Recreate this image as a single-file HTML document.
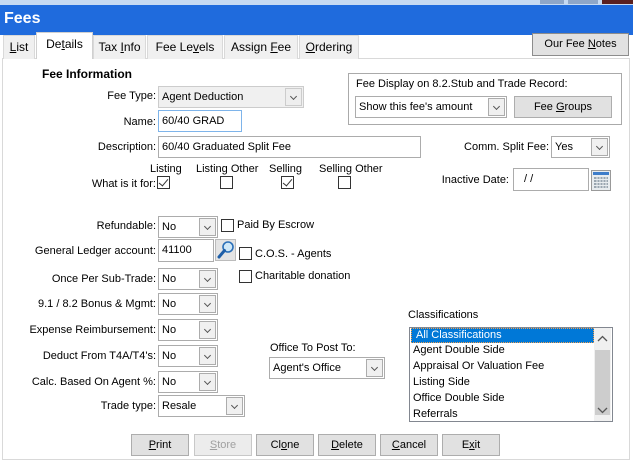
<!DOCTYPE html>
<html><head><style>
*{box-sizing:border-box;margin:0;padding:0}
body{width:633px;height:462px;position:relative;background:#fff;font-family:"Liberation Sans",sans-serif;font-size:11px;color:#000;overflow:hidden}
.a{position:absolute;white-space:nowrap}
.l{position:absolute;text-align:right;white-space:nowrap;line-height:14px}
.tab{position:absolute;top:35px;height:24px;background:#f0f0f0;border:1px solid #d9d9d9;border-bottom:none;line-height:22px;text-align:center;font-size:12px}
.sel{position:absolute;height:22px;border:1px solid #acacac;background:#fff;line-height:20px;padding-left:3px}
.sel .d{position:absolute;right:1px;top:1px;bottom:1px;width:17px;border:1px solid #acacac;background:#f0f0f0}
.sel .d:after{content:"";position:absolute;left:5px;top:5px;width:4px;height:4px;border-right:1px solid #555;border-bottom:1px solid #555;transform:rotate(45deg)}
.inp{position:absolute;height:22px;border:1px solid #acacac;background:#fff;line-height:20px;padding-left:3px}
.cb{position:absolute;width:13px;height:13px;border:1px solid #333;background:#fff}
.ck:after{content:"";position:absolute;left:3px;top:0px;width:4px;height:8px;border-right:1.3px solid #333;border-bottom:1.3px solid #333;transform:rotate(40deg)}
.btn{position:absolute;height:22px;background:#e1e1e1;border:1px solid #adadad;text-align:center;line-height:20px}
u{text-decoration:underline}
</style></head><body>
<div class="a" style="left:0;top:0;width:633px;height:5px;background:#c6daf2"></div>
<div class="a" style="left:540px;top:0;width:24px;height:4px;background:#8fa7c8"></div>
<div class="a" style="left:568px;top:0;width:30px;height:4px;background:#8fa7c8"></div>
<div class="a" style="left:602px;top:0;width:31px;height:4px;background:#5a2020"></div>
<div class="a" style="left:0;top:5px;width:633px;height:30px;background:#1f6bdd"></div>
<div class="a" style="left:4px;top:10px;color:#fff;font-weight:bold;font-size:16px">Fees</div>

<div class="a" style="left:2px;top:58px;width:628px;height:402px;border:1px solid #d9d9d9"></div>
<div class="tab" style="left:3px;width:32px"><u>L</u>ist</div>
<div class="tab" style="left:36px;top:32px;height:27px;width:57px;background:#fff;border-color:#d0d0d0;z-index:2">De<u>t</u>ails</div>
<div class="tab" style="left:93px;width:53px">Tax <u>I</u>nfo</div>
<div class="tab" style="left:147px;width:76px">Fee Le<u>v</u>els</div>
<div class="tab" style="left:224px;width:74px">Assign <u>F</u>ee</div>
<div class="tab" style="left:299px;width:60px"><u>O</u>rdering</div>
<div class="btn" style="left:532px;top:33px;width:97px;height:23px;background:#e1e1e1;border-color:#8c8c8c">Our Fee <u>N</u>otes</div>

<div class="a" style="left:42px;top:67px;font-weight:bold;font-size:12px">Fee Information</div>
<div class="l" style="right:477px;top:89px">Fee Type:</div>
<div class="sel" style="left:158px;top:86px;width:146px;background:#f0f0f0;border-color:#ccc">Agent Deduction<div class="d" style="border-color:#ccc;background:#eee"></div></div>
<div class="l" style="right:477px;top:115px">Name:</div>
<div class="inp" style="left:158px;top:110px;width:84px;border-color:#7eb4ea">60/40 GRAD</div>
<div class="l" style="right:477px;top:140px">Description:</div>
<div class="inp" style="left:158px;top:136px;width:263px">60/40 Graduated Split Fee</div>

<div class="a" style="left:348px;top:73px;width:274px;height:52px;border:1px solid #aaa"></div>
<div class="a" style="left:356px;top:78px">Fee Display on 8.2.Stub and Trade Record:</div>
<div class="sel" style="left:355px;top:96px;width:152px">Show this fee's amount<div class="d"></div></div>
<div class="btn" style="left:514px;top:96px;width:98px">Fee <u>G</u>roups</div>

<div class="l" style="right:84px;top:140px">Comm. Split Fee:</div>
<div class="sel" style="left:551px;top:136px;width:59px">Yes<div class="d"></div></div>

<div class="a" style="left:150px;top:163px">Listing</div>
<div class="a" style="left:196px;top:163px">Listing Other</div>
<div class="a" style="left:269px;top:163px">Selling</div>
<div class="a" style="left:319px;top:163px">Selling Other</div>
<div class="l" style="right:477px;top:177px">What is it for:</div>
<div class="cb ck" style="left:157px;top:176px"></div>
<div class="cb" style="left:220px;top:176px"></div>
<div class="cb ck" style="left:281px;top:176px"></div>
<div class="cb" style="left:338px;top:176px"></div>

<div class="l" style="right:124px;top:173px">Inactive Date:</div>
<div class="inp" style="left:513px;top:168px;width:76px;height:23px;padding-left:10px">/ /</div>
<svg class="a" style="left:591px;top:170px" width="20" height="21" viewBox="0 0 20 21"><rect x="0.5" y="0.5" width="19" height="20" fill="#e8ecef" stroke="#999"/><rect x="2" y="2" width="16" height="3" fill="#3d7cc9"/><g fill="#9aa6b0"><rect x="3" y="7" width="14" height="2"/><rect x="3" y="10" width="14" height="2"/><rect x="3" y="13" width="14" height="2"/><rect x="3" y="16" width="14" height="2"/></g><g stroke="#e8ecef"><line x1="6" y1="6" x2="6" y2="19"/><line x1="9" y1="6" x2="9" y2="19"/><line x1="12" y1="6" x2="12" y2="19"/><line x1="15" y1="6" x2="15" y2="19"/></g></svg>

<div class="l" style="right:477px;top:219px">Refundable:</div>
<div class="sel" style="left:158px;top:216px;width:60px">No<div class="d"></div></div>
<div class="cb" style="left:221px;top:219px"></div>
<div class="a" style="left:237px;top:219px">Paid By Escrow</div>

<div class="l" style="right:477px;top:244px">General Ledger account:</div>
<div class="inp" style="left:158px;top:239px;width:56px;height:23px">41100</div>
<svg class="a" style="left:215px;top:239px" width="21" height="22" viewBox="0 0 21 22"><rect x="0.5" y="0.5" width="20" height="21" fill="#e4e4e4" stroke="#bbb"/><circle cx="13" cy="8" r="5" fill="#cfe8f8" stroke="#2a6fb8" stroke-width="1.6"/><line x1="9.5" y1="11.5" x2="4" y2="18" stroke="#1f5fa8" stroke-width="3" stroke-linecap="round"/></svg>
<div class="cb" style="left:239px;top:247px"></div>
<div class="a" style="left:255px;top:248px">C.O.S. - Agents</div>

<div class="l" style="right:477px;top:272px">Once Per Sub-Trade:</div>
<div class="sel" style="left:158px;top:268px;width:60px">No<div class="d"></div></div>
<div class="cb" style="left:239px;top:270px"></div>
<div class="a" style="left:255px;top:270px">Charitable donation</div>

<div class="l" style="right:477px;top:297px">9.1 / 8.2 Bonus &amp; Mgmt:</div>
<div class="sel" style="left:158px;top:293px;width:60px">No<div class="d"></div></div>
<div class="l" style="right:477px;top:323px">Expense Reimbursement:</div>
<div class="sel" style="left:158px;top:319px;width:60px">No<div class="d"></div></div>
<div class="l" style="right:477px;top:349px">Deduct From T4A/T4's:</div>
<div class="sel" style="left:158px;top:345px;width:60px">No<div class="d"></div></div>
<div class="l" style="right:477px;top:375px">Calc. Based On Agent %:</div>
<div class="sel" style="left:158px;top:371px;width:60px">No<div class="d"></div></div>
<div class="l" style="right:477px;top:399px">Trade type:</div>
<div class="sel" style="left:158px;top:395px;width:87px">Resale<div class="d"></div></div>

<div class="a" style="left:270px;top:342px">Office To Post To:</div>
<div class="sel" style="left:269px;top:357px;width:116px">Agent's Office<div class="d"></div></div>

<div class="a" style="left:408px;top:309px">Classifications</div>
<div class="a" style="left:409px;top:327px;width:204px;height:95px;border:1px solid #828790;background:#fff"></div>
<div class="a" style="left:411px;top:328px;width:183px;height:15px;background:#0078d7;border:1px dotted #f0a050"></div>
<div class="a" style="left:416px;top:329px;color:#fff;line-height:13px">All Classifications</div>
<div class="a" style="left:413px;top:342px;line-height:16px">Agent Double Side<br>Appraisal Or Valuation Fee<br>Listing Side<br>Office Double Side<br>Referrals</div>
<div class="a" style="left:594px;top:328px;width:17px;height:93px;background:#f0f0f0"></div>
<div class="a" style="left:595px;top:350px;width:15px;height:65px;background:#cdcdcd"></div>
<svg class="a" style="left:597px;top:335px" width="11" height="8"><path d="M1 6 L5.5 1.5 L10 6" fill="none" stroke="#555" stroke-width="1.3"/></svg>
<svg class="a" style="left:597px;top:406px" width="11" height="8"><path d="M1 2 L5.5 6.5 L10 2" fill="none" stroke="#555" stroke-width="1.3"/></svg>

<div class="btn" style="left:131px;top:434px;width:58px"><u>P</u>rint</div>
<div class="btn" style="left:194px;top:434px;width:58px;color:#a0a0a0;border-color:#c8c8c8;background:#ececec"><u>S</u>tore</div>
<div class="btn" style="left:256px;top:434px;width:58px">Cl<u>o</u>ne</div>
<div class="btn" style="left:318px;top:434px;width:58px"><u>D</u>elete</div>
<div class="btn" style="left:380px;top:434px;width:58px"><u>C</u>ancel</div>
<div class="btn" style="left:442px;top:434px;width:58px">E<u>x</u>it</div>
</body></html>
